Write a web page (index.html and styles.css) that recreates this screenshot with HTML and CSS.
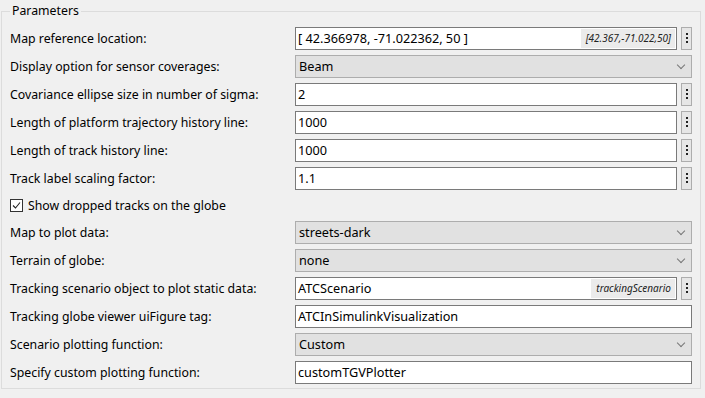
FILE: index.html
```html
<!DOCTYPE html>
<html lang="en">
<head>
    <meta charset="UTF-8">
    <title>Block Parameters</title>
    <link rel="stylesheet" href="styles.css">
</head>
<body>
    <fieldset class="params">
        <legend>Parameters</legend>

        <div class="row">
            <label>Map reference location:</label>
            <div class="field">
                <div class="edit">
                    <span class="value">[ 42.366978, -71.022362, 50 ]</span>
                    <span class="hint">[42.367,-71.022,50]</span>
                </div>
                <span class="more"><i></i><i></i><i></i></span>
            </div>
        </div>

        <div class="row">
            <label>Display option for sensor coverages:</label>
            <div class="select">Beam</div>
        </div>

        <div class="row">
            <label>Covariance ellipse size in number of sigma:</label>
            <div class="field">
                <div class="edit"><span class="value">2</span></div>
                <span class="more"><i></i><i></i><i></i></span>
            </div>
        </div>

        <div class="row">
            <label>Length of platform trajectory history line:</label>
            <div class="field">
                <div class="edit"><span class="value">1000</span></div>
                <span class="more"><i></i><i></i><i></i></span>
            </div>
        </div>

        <div class="row">
            <label>Length of track history line:</label>
            <div class="field">
                <div class="edit"><span class="value">1000</span></div>
                <span class="more"><i></i><i></i><i></i></span>
            </div>
        </div>

        <div class="row">
            <label>Track label scaling factor:</label>
            <div class="field">
                <div class="edit"><span class="value">1.1</span></div>
                <span class="more"><i></i><i></i><i></i></span>
            </div>
        </div>

        <div class="check-row">
            <span class="checkbox">
                <svg width="9" height="9" viewBox="0 0 9 9"><path d="M1 4.5 L3.5 7 L8 1.5" fill="none" stroke="#222" stroke-width="1.1"/></svg>
            </span>
            <span>Show dropped tracks on the globe</span>
        </div>

        <div class="row">
            <label>Map to plot data:</label>
            <div class="select">streets-dark</div>
        </div>

        <div class="row">
            <label>Terrain of globe:</label>
            <div class="select">none</div>
        </div>

        <div class="row">
            <label>Tracking scenario object to plot static data:</label>
            <div class="field">
                <div class="edit">
                    <span class="value">ATCScenario</span>
                    <span class="hint">trackingScenario</span>
                </div>
                <span class="more"><i></i><i></i><i></i></span>
            </div>
        </div>

        <div class="row">
            <label>Tracking globe viewer uiFigure tag:</label>
            <div class="edit"><span class="value">ATCInSimulinkVisualization</span></div>
        </div>

        <div class="row">
            <label>Scenario plotting function:</label>
            <div class="select">Custom</div>
        </div>

        <div class="row">
            <label>Specify custom plotting function:</label>
            <div class="edit"><span class="value">customTGVPlotter</span></div>
        </div>
    </fieldset>
</body>
</html>
```

FILE: styles.css
```css
body {
    margin: 0;
    background-color: #f0f0f0;
    font-family: "Noto Sans", "Open Sans", sans-serif;
    font-size: 12.3px;
    color: #000;
    height: 398px;
    overflow: hidden;
}
.params {
    margin: 4px 0 0 1px;
    width: 700px;
    height: 385px;
    box-sizing: border-box;
    border: 1px solid #dcdcdc;
    padding: 6px 8px 0 8px;
}
.params legend {
    padding: 0 2px;
    margin-left: 0;
    line-height: 14px;
}
.row {
    display: grid;
    grid-template-columns: 285px 1fr;
    align-items: center;
    height: 28px;
}
.row label {
    white-space: nowrap;
}
.field {
    display: flex;
    align-items: center;
    gap: 4px;
}
.field .edit {
    flex: 1;
}
.edit {
    display: flex;
    align-items: stretch;
    height: 23px;
    box-sizing: border-box;
    border: 1px solid #7a7a7a;
    background: #fff;
}
.edit .value {
    flex: 1;
    padding-left: 2px;
    line-height: 21px;
    font-size: 12.7px;
}
.hint {
    background: #ebebeb;
    margin: 1px;
    padding: 0 4px 0 5px;
    font-size: 10px;
    font-style: italic;
    color: #222;
    line-height: 19px;
}
.more {
    width: 11px;
    height: 23px;
    box-sizing: border-box;
    border: 1px solid #adadad;
    background: #e6e6e6;
    display: flex;
    flex-direction: column;
    align-items: center;
    justify-content: center;
    gap: 2px;
}
.more i {
    width: 2px;
    height: 2px;
    background: #222;
}
.select {
    height: 23px;
    box-sizing: border-box;
    border: 1px solid #adadad;
    background: #e1e1e1;
    padding-left: 3px;
    line-height: 21px;
    font-size: 12.7px;
    position: relative;
}
.select::after {
    content: "";
    position: absolute;
    right: 7px;
    top: 6px;
    width: 5px;
    height: 5px;
    border-right: 1px solid #777;
    border-bottom: 1px solid #777;
    transform: rotate(45deg);
}
.check-row {
    display: flex;
    align-items: center;
    gap: 5px;
    height: 26px;
}
.checkbox {
    width: 13px;
    height: 13px;
    box-sizing: border-box;
    border: 1px solid #333;
    background: #fff;
    display: flex;
    align-items: center;
    justify-content: center;
}
```
